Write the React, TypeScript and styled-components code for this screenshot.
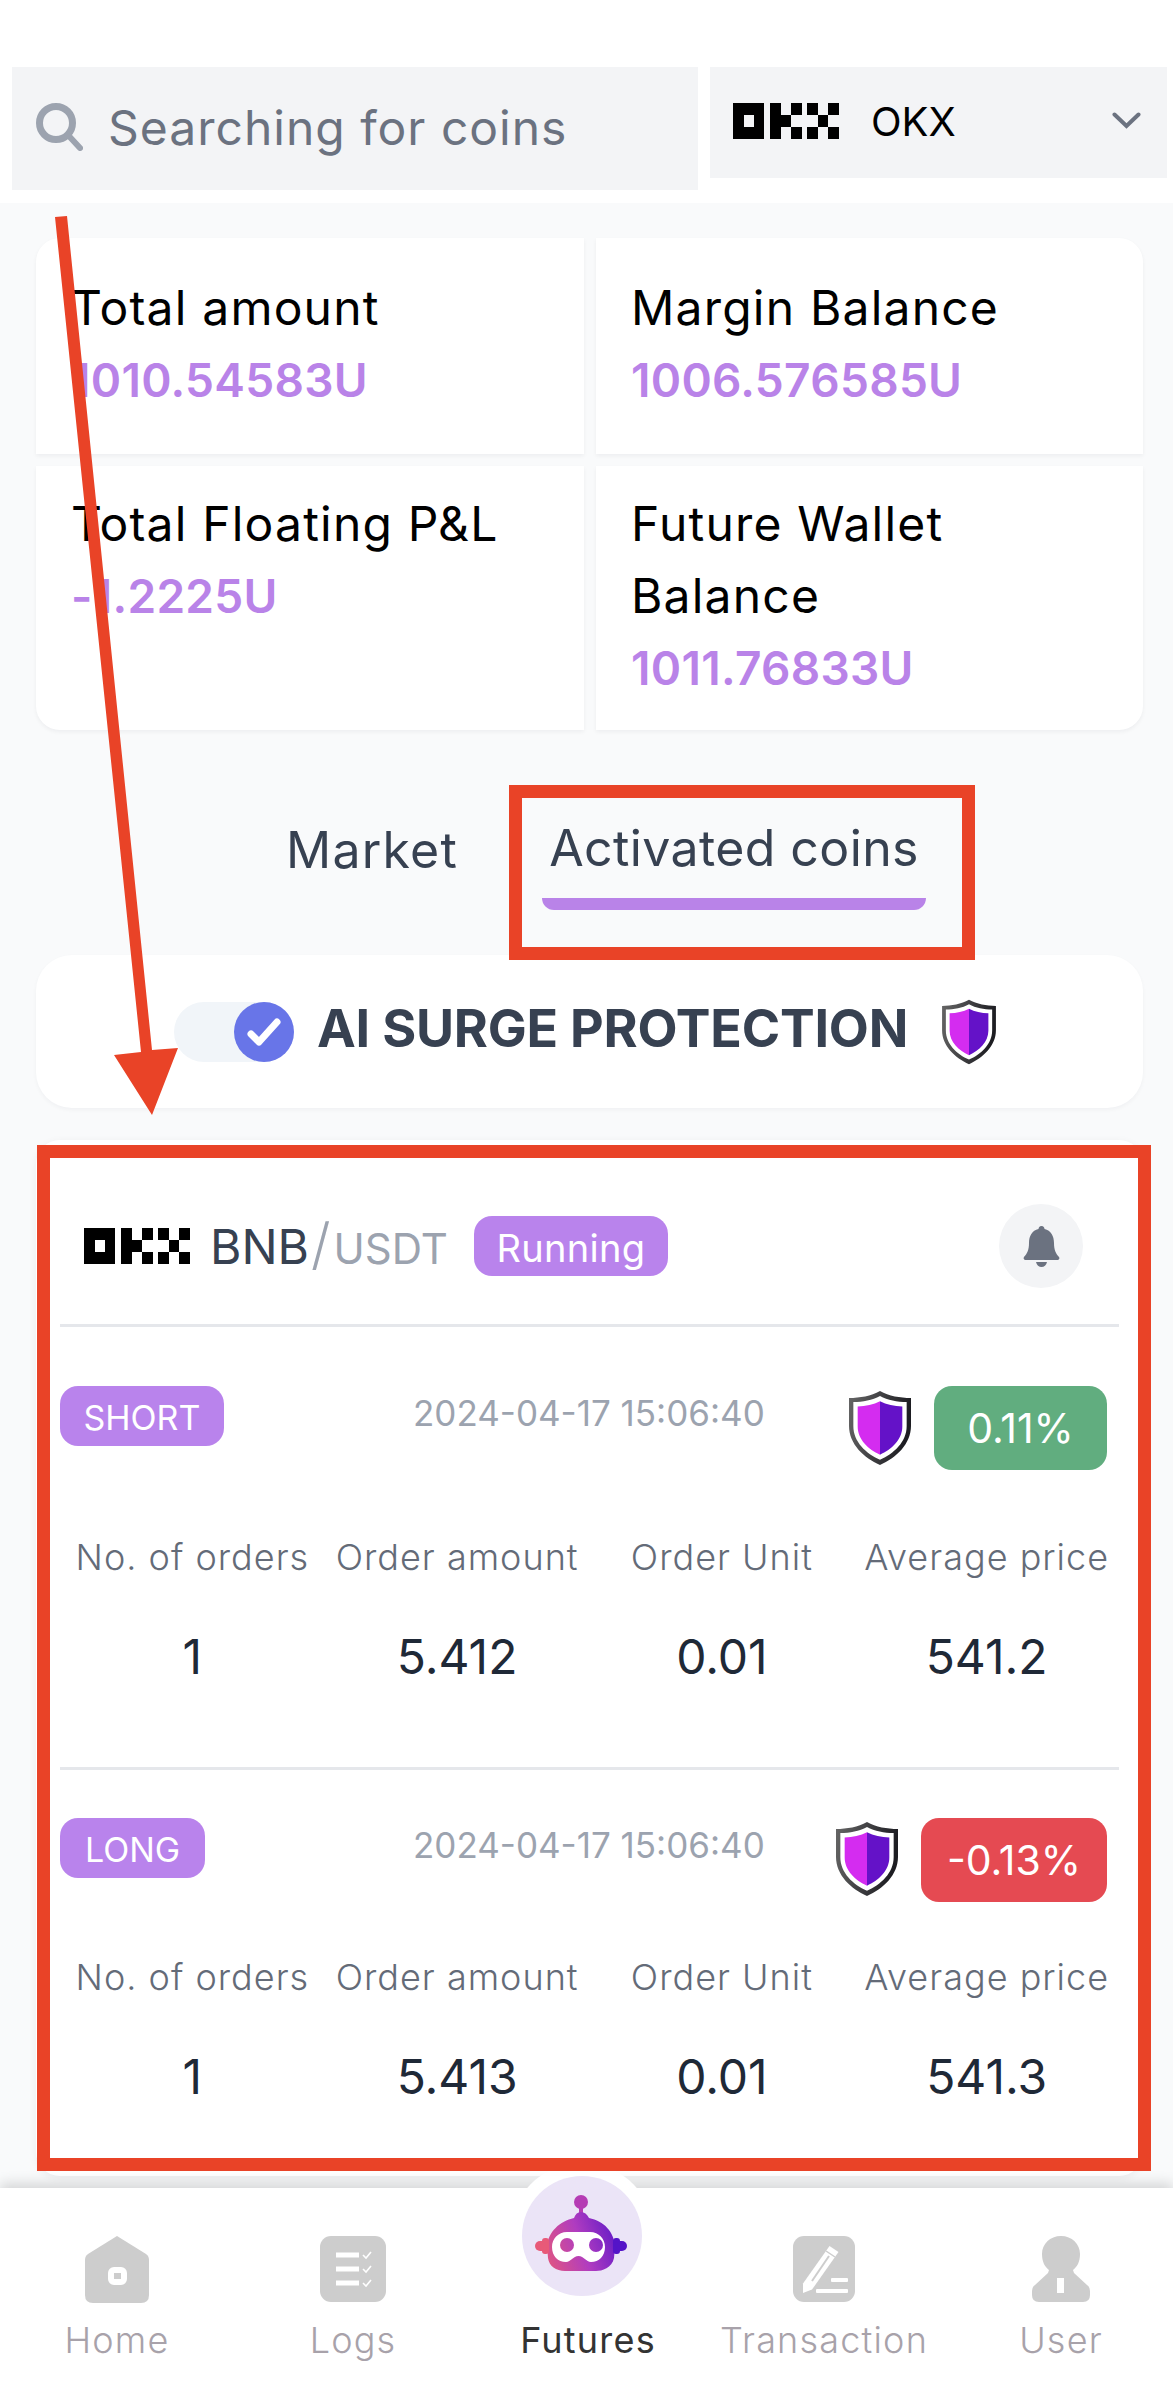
import React from "react";
import styled, { createGlobalStyle } from "styled-components";

const Global = createGlobalStyle`
  html, body { margin: 0; padding: 0; background: #fff; }
  * { box-sizing: border-box; }
  body { font-family: Inter, "Open Sans", "Liberation Sans", sans-serif; }
`;

const Page = styled.div`
  position: relative;
  width: 1173px;
  height: 2389px;
  overflow: hidden;
  display: flex;
  flex-direction: column;
  background: #f9fafb;
`;

const Header = styled.header`
  height: 203px;
  flex: none;
  background: #fff;
  padding: 67px 6px 0 12px;
  display: flex;
  align-items: flex-start;
  gap: 12px;
`;

const SearchBox = styled.div`
  width: 686px;
  height: 123px;
  background: #f3f4f6;
  display: flex;
  align-items: flex-start;
  padding: 36px 0 0 24px;
  gap: 25px;
`;

const SearchText = styled.span`
  font-size: 48px;
  line-height: 50px;
  color: #6b7280;
  letter-spacing: 1px;
`;

const ExchangeSelect = styled.div`
  flex: 1;
  height: 111px;
  background: #f3f4f6;
  display: flex;
  align-items: flex-start;
  padding: 36px 26px 0 23px;
`;

const ExchangeName = styled.span`
  font-size: 40px;
  line-height: 38px;
  color: #000;
  margin-left: 32px;
  flex: 1;
`;

const Chevron = styled.svg`
  margin-top: 9px;
`;

const Main = styled.main`
  flex: 1;
  min-height: 0;
  padding: 35px 30px 0 36px;
  display: flex;
  flex-direction: column;
`;

const SummaryGrid = styled.section`
  display: grid;
  grid-template-columns: 548px 547px;
  gap: 12px;
`;

const SummaryCard = styled.div<{ $corner?: string; $tall?: boolean }>`
  background: #fff;
  box-shadow: 0 2px 4px rgba(17, 24, 39, 0.05);
  height: ${(p) => (p.$tall ? 264 : 216)}px;
  padding: ${(p) => (p.$tall ? 22 : 34)}px 30px 0 35px;
  border-radius: ${(p) => p.$corner ?? "0"};
`;

const SummaryTitle = styled.div`
  font-size: 48px;
  line-height: 72px;
  color: #000;
  letter-spacing: 1.2px;
  white-space: nowrap;
`;

const SummaryValue = styled.div`
  font-size: 46px;
  line-height: 72px;
  font-weight: 600;
  color: #b983e8;
  letter-spacing: 0.3px;
`;

const Tabs = styled.nav`
  display: flex;
  align-items: flex-start;
  margin-top: 82px;
  padding-left: 249px;
  height: 143px;
`;

const Tab = styled.div<{ $active?: boolean }>`
  width: ${(p) => (p.$active ? 384 : 174)}px;
  height: 98px;
  font-size: 50px;
  line-height: 72px;
  color: #374151;
  text-align: center;
  white-space: nowrap;
  letter-spacing: ${(p) => (p.$active ? 0.4 : 1.2)}px;
  margin-left: ${(p) => (p.$active ? 83 : 0)}px;
  margin-top: ${(p) => (p.$active ? 0 : 2)}px;
  border-bottom: ${(p) => (p.$active ? "12px solid #b983e8" : "none")};
  border-radius: 0 0 12px 12px;
`;

const SurgeCard = styled.section`
  height: 153px;
  background: #fff;
  border-radius: 36px;
  box-shadow: 0 2px 4px rgba(17, 24, 39, 0.04);
  display: flex;
  align-items: center;
  padding-left: 138px;
`;

const Toggle = styled.div`
  width: 120px;
  height: 60px;
  border-radius: 30px;
  background: #f1f5f9;
  display: flex;
  justify-content: flex-end;
`;

const ToggleKnob = styled.div`
  width: 60px;
  height: 60px;
  border-radius: 50%;
  background: #6875e8;
  display: flex;
  align-items: center;
  justify-content: center;
`;

const SurgeLabel = styled.span`
  font-size: 52px;
  line-height: 60px;
  font-weight: 700;
  color: #374151;
  margin: -5px 33px 0 23px;
  letter-spacing: -0.2px;
  white-space: nowrap;
`;

const CoinCard = styled.section`
  margin-top: 32px;
  height: 1036px;
  background: #fff;
  border-radius: 24px;
  box-shadow: 0 2px 8px rgba(17, 24, 39, 0.06);
  padding: 64px 24px 0;
`;

const CoinHeader = styled.div`
  display: flex;
  align-items: center;
  height: 84px;
  padding: 0 36px 0 24px;
`;

const Pair = styled.span`
  font-size: 48px;
  font-weight: 400;
  color: #374151;
  margin: -5px 0 0 20px;
  white-space: nowrap;
`;

const Quote = styled.span`
  font-size: 42px;
  color: #9ca3af;
`;

const Slash = styled.span`
  font-size: 56px;
  font-weight: 300;
  color: #9ca3af;
  margin: 0 3px 0 2px;
`;

const Pill = styled.span`
  display: inline-flex;
  align-items: center;
  justify-content: center;
  height: 60px;
  padding: 3px 0 0;
  background: #b983ec;
  border-radius: 18px;
  color: #fff;
  font-size: 34px;
  font-weight: 400;
`;

const StatusPill = styled(Pill)`
  margin-left: 26px;
  width: 194px;
  font-size: 38px;
  letter-spacing: 0.3px;
`;

const BellButton = styled.div`
  margin-left: auto;
  width: 84px;
  height: 84px;
  border-radius: 50%;
  background: #f3f4f6;
  display: flex;
  align-items: center;
  justify-content: center;
`;

const Divider = styled.hr<{ $top: number }>`
  border: 0;
  height: 3px;
  background: #e5e7eb;
  margin: ${(p) => p.$top}px 0 0;
`;

const PositionRow = styled.div<{ $top: number }>`
  display: flex;
  align-items: flex-start;
  height: 84px;
  margin-top: ${(p) => p.$top}px;
  padding-right: 12px;
`;

const SideCell = styled.div`
  width: 353px;
  flex: none;
`;

const SidePill = styled(Pill)<{ $w: number }>`
  width: ${(p) => p.$w}px;
`;

const DateCell = styled.div`
  width: 350px;
  flex: none;
  font-size: 35px;
  line-height: 54px;
  font-weight: 400;
  color: #9ca3af;
  white-space: nowrap;
`;

const RowSpacer = styled.div`
  flex: 1;
`;

const ShieldSlot = styled.div<{ $top: number }>`
  margin-top: ${(p) => p.$top}px;
  display: flex;
`;

const PnlBadge = styled.div<{ $down?: boolean }>`
  margin-left: 22px;
  width: ${(p) => (p.$down ? 186 : 173)}px;
  height: 84px;
  border-radius: 18px;
  background: ${(p) => (p.$down ? "#e54a52" : "#61ad7f")};
  color: #fff;
  font-size: 41px;
  display: flex;
  align-items: center;
  justify-content: center;
`;

const StatsGrid = styled.div<{ $top: number }>`
  display: grid;
  grid-template-columns: repeat(4, 1fr);
  margin-top: ${(p) => p.$top}px;
  text-align: center;
`;

const StatLabel = styled.div`
  font-size: 36px;
  line-height: 54px;
  font-weight: 300;
  color: #646b78;
  letter-spacing: 1px;
  white-space: nowrap;
`;

const StatValue = styled.div`
  font-size: 48px;
  line-height: 72px;
  color: #1f2937;
  margin-top: 37px;
`;

const BottomNav = styled.footer`
  position: relative;
  z-index: 2;
  flex: none;
  height: 201px;
  background: #fff;
  box-shadow: 0 -5px 12px rgba(0, 0, 0, 0.14);
  display: grid;
  grid-template-columns: 234px 238px 232px 240px 234px;
`;

const NavItem = styled.div`
  position: relative;
  display: flex;
  flex-direction: column;
  align-items: center;
  padding-top: 48px;
`;

const NavIconSlot = styled.div`
  height: 66px;
  display: flex;
  align-items: center;
`;

const NavLabel = styled.span<{ $active?: boolean }>`
  margin-top: 11px;
  font-size: 36px;
  line-height: 54px;
  font-weight: ${(p) => (p.$active ? 400 : 300)};
  color: ${(p) => (p.$active ? "#333" : "#a8a2aa")};
  letter-spacing: 1.2px;
  white-space: nowrap;
`;

const RobotHalo = styled.div`
  position: absolute;
  top: -25px;
  left: 37px;
  width: 146px;
  height: 146px;
  border-radius: 50%;
  background: #fff;
  display: flex;
  align-items: center;
  justify-content: center;
`;

const RobotDisc = styled.div`
  width: 120px;
  height: 120px;
  border-radius: 50%;
  background: #ebe4f7;
  display: flex;
  justify-content: center;
  padding-top: 14px;
`;

const TabHighlight = styled.div`
  position: absolute;
  z-index: 3;
  left: 509px;
  top: 785px;
  width: 466px;
  height: 175px;
  border: 13px solid #e94327;
`;

const CardHighlight = styled.div`
  position: absolute;
  z-index: 3;
  left: 37px;
  top: 1145px;
  width: 1114px;
  height: 1026px;
  border: 13px solid #e94327;
`;

const ArrowOverlay = styled.svg`
  position: absolute;
  z-index: 3;
  left: 0;
  top: 0;
`;

function OkxLogo() {
  const blocks: [number, number, number, number][] = [
    [37, 0, 11, 36],
    [48, 12, 10, 12],
    [58, 0, 11, 12],
    [58, 24, 11, 12],
    [74, 0, 11, 12],
    [74, 24, 11, 12],
    [85, 12, 10, 12],
    [95, 0, 11, 12],
    [95, 24, 11, 12],
  ];
  return (
    <svg width="106" height="36" viewBox="0 0 106 36" style={{ flex: "none" }}>
      <path d="M0 0H31V36H0ZM11 12V24H21V12Z" fillRule="evenodd" fill="#000" />
      {blocks.map(([x, y, w, h]) => (
        <rect key={`${x}-${y}`} x={x} y={y} width={w} height={h} fill="#000" />
      ))}
    </svg>
  );
}

const SHIELD =
  "M32 1C41 6 52 8 63 8L63 36C63 54 48 68 32 75C16 68 1 54 1 36L1 8C12 8 23 6 32 1Z";

function Shield({ width, height, id }: { width: number; height: number; id: string }) {
  return (
    <svg width={width} height={height} viewBox="0 0 64 76" style={{ flex: "none" }}>
      <defs>
        <linearGradient id={`${id}o`} x1="0" x2="1" y1="0" y2="0.2">
          <stop offset="0" stopColor="#666" />
          <stop offset="1" stopColor="#1d1d22" />
        </linearGradient>
        <linearGradient id={`${id}i`} x1="0" x2="1" y1="0" y2="0">
          <stop offset="0.5" stopColor="#d42cf0" />
          <stop offset="0.5" stopColor="#6412c8" />
        </linearGradient>
      </defs>
      <path d={SHIELD} fill={`url(#${id}o)`} />
      <path d={SHIELD} fill="#fff" transform="translate(32 37) scale(.86) translate(-32 -37)" />
      <path d={SHIELD} fill={`url(#${id}i)`} transform="translate(32 38) scale(.72) translate(-32 -38)" />
    </svg>
  );
}

function Position(props: {
  side: string;
  sideWidth: number;
  pnl: string;
  down?: boolean;
  shieldTop: number;
  id: string;
  rowTop: number;
  statsTop: number;
  stats: string[];
}) {
  const labels = ["No. of orders", "Order amount", "Order Unit", "Average price"];
  return (
    <>
      <PositionRow $top={props.rowTop}>
        <SideCell>
          <SidePill $w={props.sideWidth}>{props.side}</SidePill>
        </SideCell>
        <DateCell>2024-04-17 15:06:40</DateCell>
        <RowSpacer />
        <ShieldSlot $top={props.shieldTop}>
          <Shield width={64} height={76} id={props.id} />
        </ShieldSlot>
        <PnlBadge $down={props.down}>{props.pnl}</PnlBadge>
      </PositionRow>
      <StatsGrid $top={props.statsTop}>
        {labels.map((l, i) => (
          <div key={l}>
            <StatLabel>{l}</StatLabel>
            <StatValue>{props.stats[i]}</StatValue>
          </div>
        ))}
      </StatsGrid>
    </>
  );
}

function RobotIcon() {
  const visor =
    "M567 2232H590C599 2232 605 2239 605 2247C605 2256 599 2262 591 2262C586 2262 584 2256 578.5 2256C573 2256 571 2262 566 2262C558 2262 552 2256 552 2247C552 2239 558 2232 567 2232Z";
  return (
    <svg width="100" height="86" viewBox="532 2190 100 86">
      <defs>
        <linearGradient id="robot" gradientUnits="userSpaceOnUse" x1="540" y1="2262" x2="625" y2="2232">
          <stop offset="0" stopColor="#e85a78" />
          <stop offset="0.5" stopColor="#b03cc0" />
          <stop offset="1" stopColor="#5414c8" />
        </linearGradient>
      </defs>
      <circle cx="581" cy="2202" r="7" fill="#b53cb4" />
      <rect x="579" y="2206" width="4" height="9" fill="#b53cb4" />
      <path
        d="M574 2218Q576 2212 581 2212Q586 2212 589 2218C604 2221 614 2232 615 2246L614 2258C612 2268 602 2271 596 2271L565 2271C556 2271 549 2266 548 2258L547 2246C548 2232 560 2221 574 2218Z"
        fill="url(#robot)"
      />
      <rect x="535" y="2241" width="14" height="10" rx="5" fill="#e85a78" />
      <rect x="542" y="2238" width="7" height="16" rx="3" fill="#e85a78" />
      <rect x="613" y="2241" width="14" height="10" rx="5" fill="#5414c8" />
      <rect x="613" y="2238" width="7" height="16" rx="3" fill="#5414c8" />
      <path d={visor} fill="#fff" />
      <circle cx="567" cy="2245" r="7" fill="url(#robot)" />
      <circle cx="596" cy="2245" r="7" fill="url(#robot)" />
    </svg>
  );
}

const G = "#cdcdcd";

const HomeIcon = () => (
  <svg width="64" height="67" viewBox="0 0 64 67">
    <path d="M32 0L61 18Q64 20 64 24V59Q64 67 56 67H8Q0 67 0 59V24Q0 20 3 18Z" fill={G} />
    <rect x="26" y="34" width="13" height="12" rx="3" fill={G} stroke="#fff" strokeWidth="6" />
  </svg>
);

const LogsIcon = () => (
  <svg width="66" height="66" viewBox="0 0 66 66">
    <rect width="66" height="66" rx="11" fill={G} />
    {[19, 33, 47].map((y) => (
      <g key={y}>
        <rect x="16" y={y - 2.5} width="23" height="5" fill="#fff" />
        <path d={`M43 ${y}l3 3l5-6`} stroke="#fff" strokeWidth="1.6" fill="none" />
      </g>
    ))}
  </svg>
);

const TransactionIcon = () => (
  <svg width="62" height="66" viewBox="0 0 62 66">
    <rect width="62" height="66" rx="11" fill={G} />
    <path d="M10 57L10 47.4L36.5 9.9L45.5 16.1L19 53.6Z" fill="#fff" />
    <path d="M19 45L36 20" stroke={G} strokeWidth="2" />
    <path d="M33 15L42 21" stroke={G} strokeWidth="1.5" />
    <rect x="38" y="42" width="17" height="4" rx="1" fill="#fff" />
    <rect x="23" y="53" width="32" height="4" rx="1" fill="#fff" />
  </svg>
);

const UserIcon = () => (
  <svg width="58" height="66" viewBox="0 0 58 66">
    <path
      d="M29 0C40 0 48 8 48 18C48 26 45 31 41 34L42 37L55 49Q58 51 58 55V59Q58 66 51 66H7Q0 66 0 59V55Q0 51 3 49L16 37L17 34C13 31 10 26 10 18C10 8 18 0 29 0Z"
      fill={G}
    />
    <rect x="25" y="42" width="7" height="15" fill="#fff" />
  </svg>
);

export default function App() {
  return (
    <Page>
      <Global />
      <Header>
        <SearchBox>
          <svg width="47" height="48" viewBox="0 0 47 48" style={{ flex: "none" }}>
            <circle cx="20" cy="20" r="16.5" fill="none" stroke="#9ca3af" strokeWidth="7" />
            <path d="M32 32L44 45" stroke="#9ca3af" strokeWidth="6" strokeLinecap="round" />
          </svg>
          <SearchText>Searching for coins</SearchText>
        </SearchBox>
        <ExchangeSelect>
          <OkxLogo />
          <ExchangeName>OKX</ExchangeName>
          <Chevron width="29" height="17" viewBox="0 0 29 17">
            <path d="M2.5 2.5L14.5 14L26.5 2.5" fill="none" stroke="#6b7280" strokeWidth="4" strokeLinecap="round" />
          </Chevron>
        </ExchangeSelect>
      </Header>

      <Main>
        <SummaryGrid>
          <SummaryCard $corner="24px 0 0 0">
            <SummaryTitle>Total amount</SummaryTitle>
            <SummaryValue>1010.54583U</SummaryValue>
          </SummaryCard>
          <SummaryCard $corner="0 24px 0 0">
            <SummaryTitle>Margin Balance</SummaryTitle>
            <SummaryValue>1006.576585U</SummaryValue>
          </SummaryCard>
          <SummaryCard $tall $corner="0 0 0 24px">
            <SummaryTitle>Total Floating P&amp;L</SummaryTitle>
            <SummaryValue>-1.2225U</SummaryValue>
          </SummaryCard>
          <SummaryCard $tall $corner="0 0 24px 0">
            <SummaryTitle>Future Wallet</SummaryTitle>
            <SummaryTitle>Balance</SummaryTitle>
            <SummaryValue>1011.76833U</SummaryValue>
          </SummaryCard>
        </SummaryGrid>

        <Tabs>
          <Tab>Market</Tab>
          <Tab $active>Activated coins</Tab>
        </Tabs>

        <SurgeCard>
          <Toggle>
            <ToggleKnob>
              <svg width="36" height="30" viewBox="0 0 36 30">
                <path d="M5 17L13 25L31 5" fill="none" stroke="#fff" strokeWidth="7" strokeLinecap="round" strokeLinejoin="round" />
              </svg>
            </ToggleKnob>
          </Toggle>
          <SurgeLabel>AI SURGE PROTECTION</SurgeLabel>
          <Shield width={56} height={66} id="surge" />
        </SurgeCard>

        <CoinCard>
          <CoinHeader>
            <OkxLogo />
            <Pair>
              BNB
              <Slash>/</Slash>
              <Quote>USDT</Quote>
            </Pair>
            <StatusPill>Running</StatusPill>
            <BellButton>
              <svg width="37" height="41" viewBox="0 0 37 41">
                <path
                  d="M18.5 0C20.5 0 21.5 1.5 21.5 3C28 4.5 31 10 31 17C31 24 33 28 36 31C37 32.5 36 34 34.5 34H2.5C1 34 0 32.5 1 31C4 28 6 24 6 17C6 10 9 4.5 15.5 3C15.5 1.5 16.5 0 18.5 0Z"
                  fill="#6b7280"
                />
                <path d="M13 36H24C23.5 39 21 41 18.5 41C16 41 13.5 39 13 36Z" fill="#6b7280" />
              </svg>
            </BellButton>
          </CoinHeader>
          <Divider $top={36} />
          <Position
            id="s1"
            rowTop={59}
            side="SHORT"
            sideWidth={164}
            pnl="0.11%"
            shieldTop={4}
            statsTop={60}
            stats={["1", "5.412", "0.01", "541.2"]}
          />
          <Divider $top={74} />
          <Position
            id="s2"
            rowTop={48}
            side="LONG"
            sideWidth={145}
            pnl="-0.13%"
            down
            shieldTop={3}
            statsTop={48}
            stats={["1", "5.413", "0.01", "541.3"]}
          />
        </CoinCard>
      </Main>

      <BottomNav>
        <NavItem>
          <NavIconSlot><HomeIcon /></NavIconSlot>
          <NavLabel>Home</NavLabel>
        </NavItem>
        <NavItem>
          <NavIconSlot><LogsIcon /></NavIconSlot>
          <NavLabel>Logs</NavLabel>
        </NavItem>
        <NavItem>
          <RobotHalo>
            <RobotDisc><RobotIcon /></RobotDisc>
          </RobotHalo>
          <NavIconSlot />
          <NavLabel $active>Futures</NavLabel>
        </NavItem>
        <NavItem>
          <NavIconSlot><TransactionIcon /></NavIconSlot>
          <NavLabel>Transaction</NavLabel>
        </NavItem>
        <NavItem>
          <NavIconSlot><UserIcon /></NavIconSlot>
          <NavLabel>User</NavLabel>
        </NavItem>
      </BottomNav>

      <TabHighlight />
      <CardHighlight />
      <ArrowOverlay width="1173" height="2389" viewBox="0 0 1173 2389">
        <path d="M55 217L67 216L152 1050L178 1048L152 1115L114 1055L141 1052Z" fill="#e94327" />
      </ArrowOverlay>
    </Page>
  );
}
